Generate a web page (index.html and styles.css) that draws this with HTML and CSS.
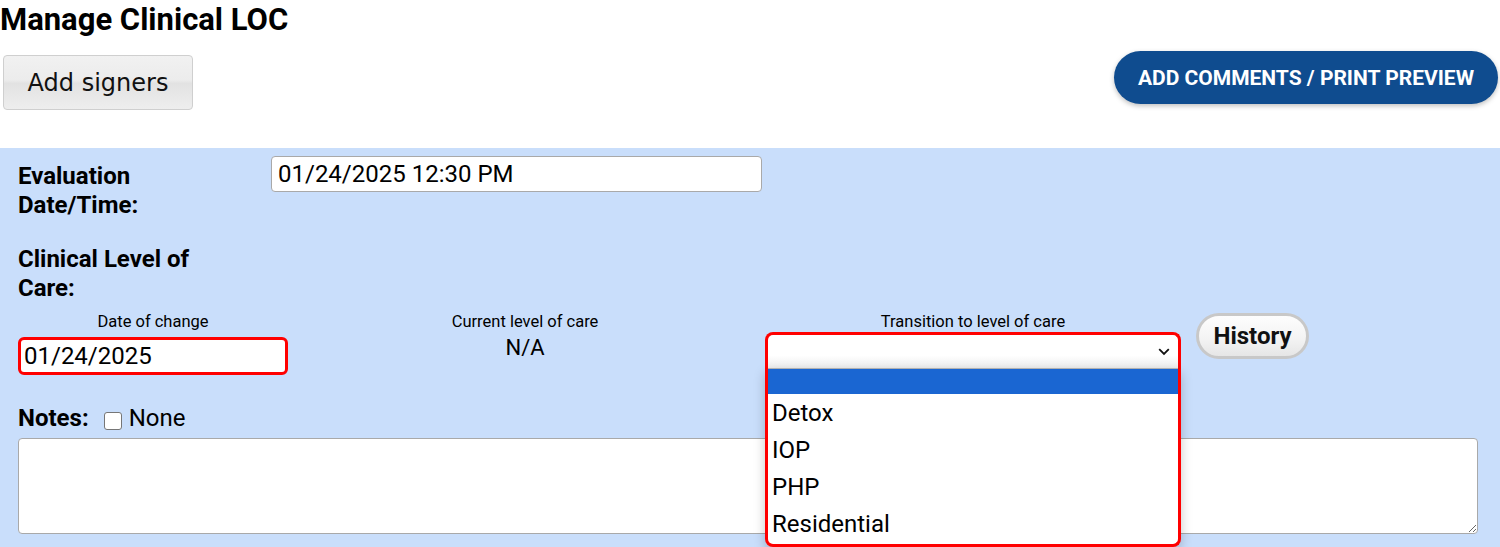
FILE: index.html
```html
<!DOCTYPE html>
<html lang="en">
<head>
<meta charset="utf-8">
<title>Manage Clinical LOC</title>
<link rel="stylesheet" href="styles.css">
</head>
<body>
<h1 class="title">Manage Clinical LOC</h1>
<div class="toolbar">
  <button class="btn-signers" type="button">Add signers</button>
  <button class="btn-primary" type="button">ADD COMMENTS / PRINT PREVIEW</button>
</div>
<div class="panel">
  <div class="field-row">
    <div class="field-label">Evaluation Date/Time:</div>
    <div class="text-input eval-input">01/24/2025 12:30 PM</div>
  </div>
  <div class="section-label">Clinical Level of Care:</div>
  <div class="loc-grid">
    <div class="loc-col">
      <div class="col-head">Date of change</div>
      <div class="text-input date-input">01/24/2025</div>
    </div>
    <div class="loc-col">
      <div class="col-head">Current level of care</div>
      <div class="current-value">N/A</div>
    </div>
    <div class="loc-col col-transition">
      <div class="col-head">Transition to level of care</div>
      <div class="select-box">
        <svg class="chevron" viewBox="0 0 12 8" width="12" height="8"><path d="M1.2 1.2 L6 6 L10.8 1.2" fill="none" stroke="#111" stroke-width="1.8"/></svg>
        <div class="dropdown">
          <div class="option option-empty"></div>
          <div class="option">Detox</div>
          <div class="option">IOP</div>
          <div class="option">PHP</div>
          <div class="option">Residential</div>
        </div>
      </div>
    </div>
    <div class="loc-col col-history">
      <button class="btn-history" type="button">History</button>
    </div>
  </div>
  <div class="notes-row">
    <span class="notes-label">Notes:</span>
    <span class="checkbox"></span>
    <span class="notes-none">None</span>
  </div>
  <textarea class="notes-area"></textarea>
</div>
</body>
</html>
```

FILE: styles.css
```css
html, body {
  margin: 0;
  padding: 0;
  background: #ffffff;
  font-family: Roboto, "Liberation Sans", Arial, sans-serif;
  color: #000;
  overflow: hidden;
}

.title {
  margin: 0;
  font-size: 31px;
  font-weight: 700;
  line-height: 39px;
}

.toolbar {
  display: flex;
  justify-content: space-between;
  align-items: flex-start;
  margin-top: 12px;
  height: 58px;
  padding: 0 2px 0 3px;
}

.btn-signers {
  margin-top: 4px;
  width: 190px;
  height: 55px;
  font-family: "DejaVu Sans", Verdana, sans-serif;
  font-size: 24px;
  color: #111;
  background: linear-gradient(#f1f1f1 0%, #ececec 45%, #e2e2e2 52%, #eeeeee 100%);
  border: 1px solid #cfcfcf;
  border-radius: 4px;
  padding: 0;
}

.btn-primary {
  width: 384px;
  height: 53px;
  border: none;
  border-radius: 27px;
  background: #0f4c8f;
  color: #fff;
  font-family: Roboto, sans-serif;
  font-weight: 700;
  font-size: 21px;
  box-shadow: 0 2px 5px rgba(0, 0, 0, 0.25);
  padding: 0;
}

.panel {
  margin-top: 39px;
  background: #c9defb;
  padding: 8px 22px 14px 18px;
}

.field-row {
  display: grid;
  grid-template-columns: 253px 491px;
}

.field-label,
.section-label {
  font-size: 24px;
  font-weight: 700;
  line-height: 29px;
  width: 200px;
}

.field-label {
  padding-top: 6px;
}

.text-input {
  background: #fff;
  font-size: 24px;
  line-height: 28px;
  box-sizing: border-box;
}

.eval-input {
  height: 36px;
  border: 1px solid #a9a9a9;
  border-radius: 4px;
  padding: 3px 6px;
}

.section-label {
  margin-top: 25px;
}

.loc-grid {
  display: grid;
  grid-template-columns: 270px 474px 419px auto;
  align-items: start;
  margin-top: 9px;
}

.loc-col {
  display: flex;
  flex-direction: column;
  align-items: stretch;
}

.col-head {
  font-size: 16.5px;
  line-height: 20px;
  text-align: center;
}

.date-input {
  margin-top: 5px;
  height: 38px;
  border: 3px solid #ff0000;
  border-radius: 6px;
  padding: 2px 3px;
}

.current-value {
  margin-top: 3px;
  font-size: 22px;
  line-height: 26px;
  text-align: center;
}

.col-transition {
  margin-left: 3px;
}

.select-box {
  position: relative;
  margin-top: 0;
  height: 37px;
  box-sizing: border-box;
  border: 3px solid #ff0000;
  border-bottom: none;
  border-radius: 8px 8px 0 0;
  background: linear-gradient(#ffffff 0%, #ffffff 60%, #ececec 100%);
  box-shadow: inset 0 -1px 0 #b9b9b9;
}

.chevron {
  position: absolute;
  right: 8px;
  top: 13px;
}

.dropdown {
  position: absolute;
  top: 100%;
  left: -3px;
  right: -3px;
  padding-bottom: 2px;
  background: #fff;
  border: 3px solid #ff0000;
  border-top: none;
  border-radius: 0 0 8px 8px;
  box-shadow: 0 4px 12px rgba(0, 0, 0, 0.22);
  z-index: 5;
}

.option {
  height: 37px;
  line-height: 39px;
  font-size: 24px;
  padding-left: 4px;
  color: #000;
  overflow: hidden;
}

.option-empty {
  height: 25px;
  background: #1a66d2;
}

.col-history {
  padding-left: 15px;
  align-items: flex-start;
}

.btn-history {
  margin-top: 1px;
  width: 113px;
  height: 46px;
  border: 3px solid #c8c8c8;
  border-radius: 23px;
  background: linear-gradient(#fdfdfd 0%, #f4f4f4 55%, #e6e6e6 100%);
  font-family: Roboto, sans-serif;
  font-weight: 700;
  font-size: 24px;
  color: #111;
  padding: 0;
}

.notes-row {
  display: flex;
  align-items: center;
  margin-top: 29px;
  height: 28px;
}

.notes-label {
  font-size: 24px;
  font-weight: 700;
  line-height: 28px;
}

.checkbox {
  width: 18px;
  height: 18px;
  box-sizing: border-box;
  border: 1px solid #767676;
  border-radius: 3px;
  background: #fff;
  margin-left: 15px;
  margin-top: 6px;
}

.notes-none {
  font-size: 24px;
  line-height: 28px;
  margin-left: 7px;
}

.notes-area {
  display: block;
  margin-top: 6px;
  width: 1460px;
  height: 96px;
  box-sizing: border-box;
  border: 1px solid #a9a9a9;
  border-radius: 4px;
  background: #fff;
  font-family: Roboto, sans-serif;
}
```
